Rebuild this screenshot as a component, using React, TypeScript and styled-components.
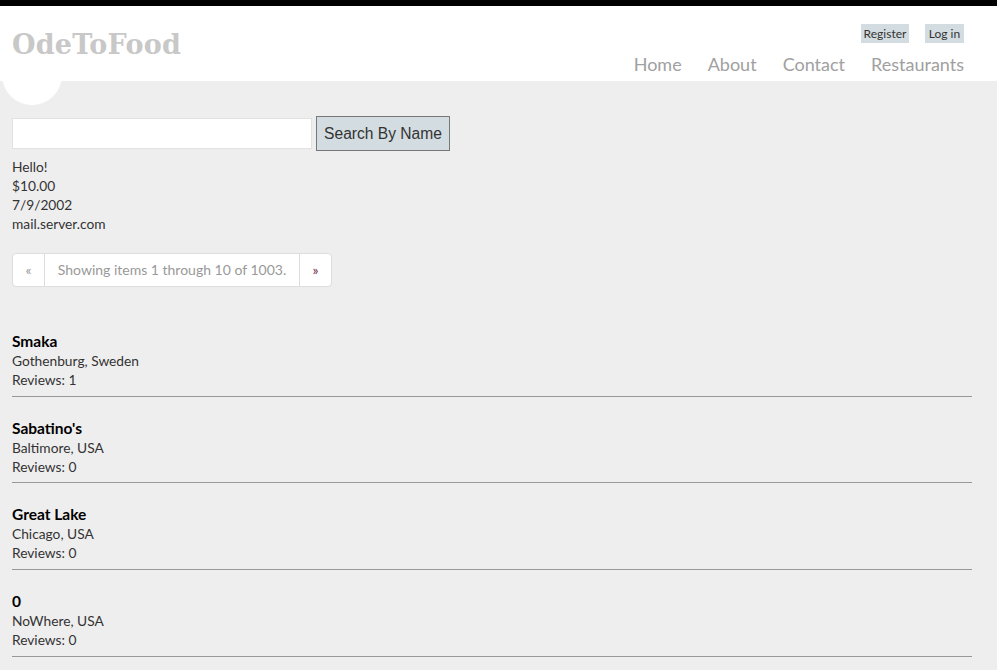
import React from "react";
import styled, { createGlobalStyle } from "styled-components";

const Global = createGlobalStyle`
  html, body { margin: 0; padding: 0; }
  body {
    background: #efeeef;
    color: #333;
    font-family: Lato, "Open Sans", sans-serif;
    font-size: 13.75px;
    line-height: 19px;
    border-top: 6px solid #000;
    overflow: hidden;
    height: 664px;
  }
`;

const Header = styled.header`
  position: relative;
  height: 75px;
  background: #fff;
  display: flex;
  justify-content: space-between;
  padding: 0 33px 0 12px;
`;

const Logo = styled.div`
  position: relative;
  z-index: 1;
  font-family: "DejaVu Serif", "Liberation Serif", serif;
  font-weight: 700;
  font-size: 27px;
  line-height: 32px;
  letter-spacing: 0.2px;
  color: #c8c8c8;
  margin-top: 23px;
`;

const Bump = styled.div`
  position: absolute;
  left: 2px;
  top: 39px;
  width: 60px;
  height: 60px;
  border-radius: 50%;
  background: #fff;
`;

const HeaderRight = styled.div`
  position: relative;
  z-index: 1;
  display: flex;
  flex-direction: column;
  align-items: flex-end;
  padding-top: 18px;
`;

const AuthLinks = styled.div`
  display: flex;
  gap: 16px;
`;

const AuthLink = styled.a<{ $width: number }>`
  width: ${(p) => p.$width}px;
  background: #d3dce0;
  color: #333;
  font-size: 12px;
  line-height: 19px;
  text-align: center;
`;

const Nav = styled.nav`
  display: flex;
  gap: 26px;
  margin-top: 9px;
`;

const NavLink = styled.a`
  color: #a0a0a0;
  font-size: 18px;
  line-height: 24px;
`;

const Main = styled.main`
  padding: 35px 25px 0 12px;
`;

const SearchForm = styled.form`
  display: flex;
  align-items: center;
  gap: 4px;
  height: 35px;
`;

const SearchInput = styled.input`
  box-sizing: border-box;
  width: 300px;
  height: 31px;
  background: #fff;
  border: 1px solid #e2e2e2;
  padding: 0 4px;
`;

const SearchButton = styled.button`
  box-sizing: border-box;
  width: 134px;
  height: 35px;
  padding: 0;
  background: #d3dce0;
  border: 1px solid #787878;
  color: #333;
  font-family: "Liberation Sans", Arial, sans-serif;
  font-size: 15.6px;
`;

const Info = styled.div`
  margin-top: 6px;
`;

const Pager = styled.div`
  display: inline-flex;
  height: 34px;
  box-sizing: border-box;
  margin-top: 20px;
  background: #fff;
  border: 1px solid #ddd;
  border-radius: 4px;
  font-size: 14px;
  line-height: 32px;
`;

const PagerCell = styled.span<{ $dark?: boolean; $wide?: boolean }>`
  box-sizing: border-box;
  text-align: center;
  width: ${(p) => (p.$wide ? "255px" : "32px")};
  color: ${(p) => (p.$dark ? "#7b2b45" : "#999")};
  & + & {
    border-left: 1px solid #ddd;
  }
  &:first-child {
    width: 31px;
  }
`;

const List = styled.div`
  margin-top: 45px;
`;

const Item = styled.article`
  border-bottom: 1px solid #999;
  height: 63.67px;
  margin-bottom: 22px;
`;

const Name = styled.div`
  font-size: 15.5px;
  font-weight: 700;
  line-height: 19px;
  color: #000;
`;

const Row = styled.div``;

const items = [
  { name: "Smaka", place: "Gothenburg, Sweden", reviews: 1 },
  { name: "Sabatino's", place: "Baltimore, USA", reviews: 0 },
  { name: "Great Lake", place: "Chicago, USA", reviews: 0 },
  { name: "0", place: "NoWhere, USA", reviews: 0 },
];

export default function App() {
  return (
    <>
      <Global />
      <Header>
        <Logo>OdeToFood</Logo>
        <Bump />
        <HeaderRight>
          <AuthLinks>
            <AuthLink $width={48}>Register</AuthLink>
            <AuthLink $width={39}>Log in</AuthLink>
          </AuthLinks>
          <Nav>
            <NavLink>Home</NavLink>
            <NavLink>About</NavLink>
            <NavLink>Contact</NavLink>
            <NavLink>Restaurants</NavLink>
          </Nav>
        </HeaderRight>
      </Header>
      <Main>
        <SearchForm onSubmit={(e) => e.preventDefault()}>
          <SearchInput type="text" />
          <SearchButton type="submit">Search By Name</SearchButton>
        </SearchForm>
        <Info>
          <Row>Hello!</Row>
          <Row>$10.00</Row>
          <Row>7/9/2002</Row>
          <Row>mail.server.com</Row>
        </Info>
        <Pager>
          <PagerCell>«</PagerCell>
          <PagerCell $wide>Showing items 1 through 10 of 1003.</PagerCell>
          <PagerCell $dark>»</PagerCell>
        </Pager>
        <List>
          {items.map((it) => (
            <Item key={it.name}>
              <Name>{it.name}</Name>
              <Row>{it.place}</Row>
              <Row>Reviews: {it.reviews}</Row>
            </Item>
          ))}
        </List>
      </Main>
    </>
  );
}
